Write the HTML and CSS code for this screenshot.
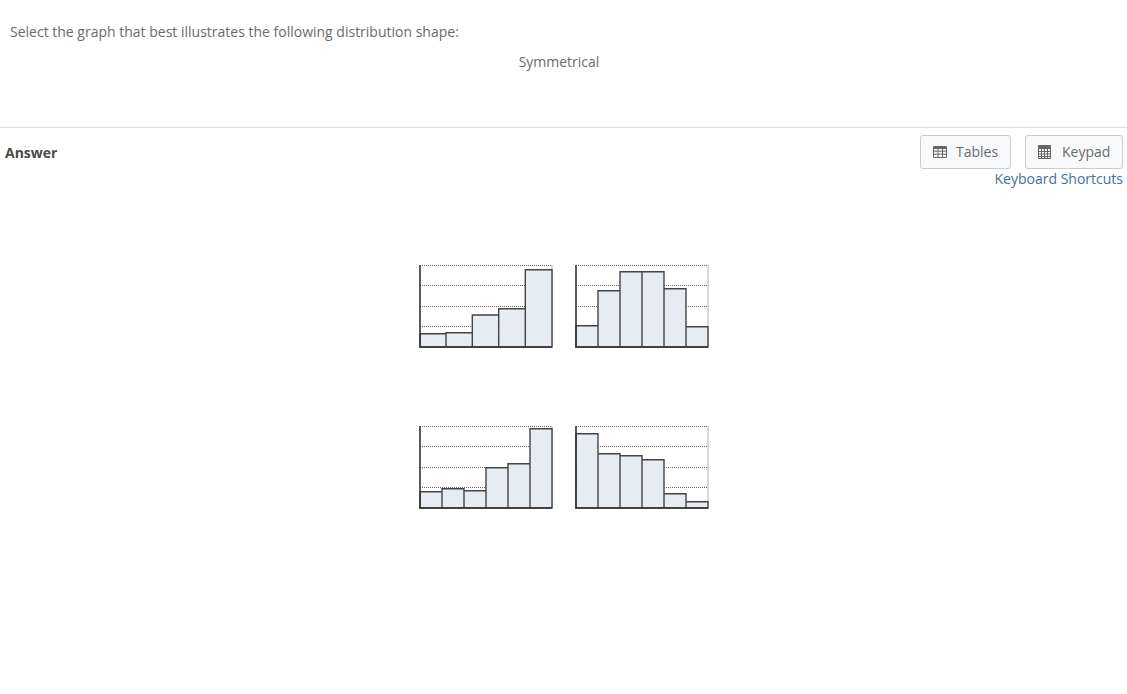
FILE: index.html
```html
<!DOCTYPE html>
<html lang="en">
<head>
<meta charset="utf-8">
<title>Question</title>
<link rel="stylesheet" href="styles.css">
</head>
<body>
<section class="question">
  <p class="prompt">Select the graph that best illustrates the following distribution shape:</p>
  <p class="shape">Symmetrical</p>
</section>
<section class="answer">
  <div class="answer-head">
    <h2 class="answer-title">Answer</h2>
    <div class="tools">
      <div class="tool-buttons">
        <button class="tool tool-tables" type="button">
          <svg class="tool-icon" viewBox="0 0 14 12" width="14" height="12"><path class="icon-frame" d="M.5.5h13v11H.5z"/><path class="icon-fill" d="M.5.5h13v2.5H.5z"/><path class="icon-line" d="M.5 5.2h13M.5 8.2h13M5 3v8.5M9.5 3v8.5"/></svg>
          <span>Tables</span>
        </button>
        <button class="tool tool-keypad" type="button">
          <svg class="tool-icon" viewBox="0 0 13 14" width="13" height="14"><path class="icon-frame" d="M.5.5h12v13H.5z"/><path class="icon-fill" d="M.5.5h12v3.5H.5z"/><path class="icon-line" d="M.5 6.5h12M.5 9h12M.5 11.5h12M3.5 4v9.5M6.5 4v9.5M9.5 4v9.5"/></svg>
          <span>Keypad</span>
        </button>
      </div>
      <a class="shortcuts" href="#">Keyboard Shortcuts</a>
    </div>
  </div>
  <div class="charts">
    <svg class="chart" viewBox="0 0 135 85" width="135" height="85">
      <path class="grid" d="M1 1.5H133M1 21.5H133M1 42.5H133M1 62.5H133M133 1.5V83"/>
      <path class="bar" d="M1 83V69.7H27V83zM27 83V68.7H53.3V83zM53.3 83V51H79.7V83zM79.7 83V44.7H106.3V83zM106.3 83V5.7H133V83z"/>
      <path class="axis" d="M1 1V83H133"/>
    </svg>
    <svg class="chart" viewBox="0 0 135 85" width="135" height="85">
      <path class="grid" d="M1 1.5H133M1 21.5H133M1 42.5H133M1 62.5H133M133 1.5V83"/>
      <path class="bar" d="M1 83V61.7H23V83zM23 83V26.7H45V83zM45 83V7.7H67V83zM67 83V7.7H89V83zM89 83V24.7H111V83zM111 83V62.7H133V83z"/>
      <path class="axis" d="M1 1V83H133"/>
    </svg>
    <svg class="chart" viewBox="0 0 135 85" width="135" height="85">
      <path class="grid" d="M1 1.5H133M1 21.5H133M1 42.5H133M1 62.5H133M133 1.5V83"/>
      <path class="bar" d="M1 83V66.7H23V83zM23 83V63.7H45V83zM45 83V65.7H67V83zM67 83V42.7H89V83zM89 83V38.7H111V83zM111 83V3.7H133V83z"/>
      <path class="axis" d="M1 1V83H133"/>
    </svg>
    <svg class="chart" viewBox="0 0 135 85" width="135" height="85">
      <path class="grid" d="M1 1.5H133M1 21.5H133M1 42.5H133M1 62.5H133M133 1.5V83"/>
      <path class="bar" d="M1 83V8.7H23V83zM23 83V28.7H45V83zM45 83V30.7H67V83zM67 83V34.7H89V83zM89 83V68.7H111V83zM111 83V76.7H133V83z"/>
      <path class="axis" d="M1 1V83H133"/>
    </svg>
  </div>
</section>
</body>
</html>
```
FILE: styles.css
```css
* { box-sizing: border-box; }
html, body { margin: 0; padding: 0; background: #fff; }
body {
  font-family: "Open Sans", sans-serif;
  font-size: 14px;
  line-height: 20px;
  color: #6b6b6b;
}
.question {
  height: 128px;
  padding: 22px 19px 0 10px;
  border-bottom: 1px solid #ddd;
}
.prompt { margin: 0; }
.shape { margin: 10px 0 0; text-align: center; }
.answer-head {
  display: flex;
  justify-content: space-between;
  align-items: flex-start;
  padding: 7px 4px 0 5px;
}
.answer-title {
  margin: 8px 0 0;
  font-size: 14px;
  line-height: 20px;
  font-weight: 700;
  color: #4a4a4a;
}
.tools {
  display: flex;
  flex-direction: column;
  align-items: flex-end;
}
.tool-buttons { display: flex; gap: 14px; }
.tool {
  display: flex;
  align-items: center;
  height: 34px;
  padding: 0 12px;
  border: 1px solid #ccc;
  border-radius: 3px;
  background: #f8f9fa;
  color: #6b6b6b;
  font: inherit;
}
.tool-tables { width: 91px; gap: 9px; }
.tool-keypad { width: 98px; gap: 11px; }
.tool-icon { flex: none; }
.icon-frame { fill: none; stroke: #666; stroke-width: 1; }
.icon-fill { fill: #666; }
.icon-line { fill: none; stroke: #666; stroke-width: 1; }
.shortcuts {
  color: #3f6f9f;
  text-decoration: none;
}
.charts {
  display: grid;
  grid-template-columns: 135px 135px;
  grid-auto-rows: 85px;
  column-gap: 21px;
  row-gap: 76px;
  justify-content: start;
  margin: 75px 0 0 419px;
}
.chart { display: block; }
.grid {
  fill: none;
  stroke: #666;
  stroke-width: 1;
  stroke-dasharray: 1 1;
}
.bar {
  fill: #e6ecf2;
  stroke: #444;
  stroke-width: 1.4;
}
.axis {
  fill: none;
  stroke: #333;
  stroke-width: 1.6;
}
```
